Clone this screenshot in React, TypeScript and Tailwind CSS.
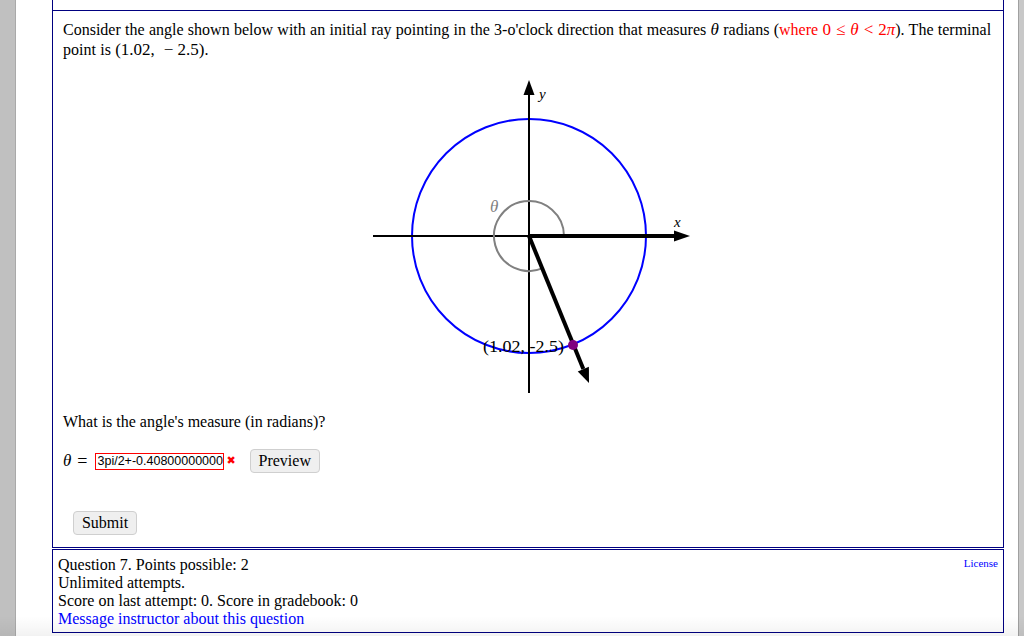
import React from "react";

function Graph() {
  const ux = 0.3778, uy = 0.9259;
  const T = { x: 588, y: 383 };
  const B = { x: T.x - 15 * ux, y: T.y - 15 * uy };
  const px = 0.9259, py = -0.3778;
  return (
    <svg width="340" height="330" viewBox="358 70 340 330" className="block mx-auto">
      <circle cx="528" cy="236" r="117" fill="none" stroke="#0000ff" strokeWidth="2" />
      <line x1="372" y1="236" x2="678" y2="236" stroke="#000" strokeWidth="2" />
      <polygon points="689,236 673,230.5 673,241.5" fill="#000" />
      <line x1="528" y1="393" x2="528" y2="90" stroke="#000" strokeWidth="2" />
      <polygon points="528,80 522.5,95 533.5,95" fill="#000" />
      <path d="M 563 236 A 35 35 0 1 0 541.8 268.2" fill="none" stroke="#808080" strokeWidth="2" />
      <line x1="528" y1="236" x2="676" y2="236" stroke="#000" strokeWidth="4" />
      <line x1="528" y1="236" x2={B.x} y2={B.y} stroke="#000" strokeWidth="4" />
      <polygon
        points={`${T.x},${T.y} ${B.x + 6 * px},${B.y + 6 * py} ${B.x - 6 * px},${B.y - 6 * py}`}
        fill="#000"
      />
      <text x="538" y="99" fontFamily="Liberation Serif, serif" fontStyle="italic" fontSize="15" fill="#000">y</text>
      <text x="673" y="227" fontFamily="Liberation Serif, serif" fontStyle="italic" fontSize="15" fill="#000">x</text>
      <text x="489" y="212" fontFamily="Liberation Serif, serif" fontStyle="italic" fontSize="17" fill="#808080">θ</text>
      <text x="482" y="352" fontFamily="Liberation Serif, serif" fontSize="17" fill="#000" textLength="81" lengthAdjust="spacingAndGlyphs">(1.02, -2.5)</text>
      <circle cx="572" cy="345" r="5" fill="#800080" />
    </svg>
  );
}

export default function App() {
  return (
    <div className="relative w-[1024px] h-[636px] overflow-hidden bg-white flex font-['Liberation_Serif',serif] text-black">
      <div className="w-[16px] h-full bg-[#c0c0c0] border-r border-[#a9a9a9]" />
      <div className="flex-1 h-full pl-[36px] bg-white">
        <div className="w-[952px] h-[11px] border-x border-b border-[#000080]" />
        <div className="w-[952px] h-[537px] border-x border-b border-[#000080] pl-[10px] pr-[8px] pt-[9px]">
          <p className="text-[16px] leading-[20px] [word-spacing:0.3px]">
            Consider the angle shown below with an initial ray pointing in the 3-o'clock direction that measures{" "}
            <i className="text-[17px]">θ</i> radians (
            <span className="text-[#ff0000]">
              where <span className="text-[17px]">0</span>
              <span className="mx-[5px] text-[17px]">≤</span>
              <i className="text-[17px]">θ</i>
              <span className="mx-[5px] text-[17px]">&lt;</span>
              <span className="text-[17px]">2</span>
              <i className="text-[17px]">π</i>
            </span>
            ). The terminal point is{" "}
            <span className="text-[17px]">
              (1.02,<span className="inline-block w-[9px]" />−<span className="inline-block w-[4px]" />2.5)
            </span>
            .
          </p>
          <div className="mt-[10px]">
            <Graph />
          </div>
          <p className="mt-[12px] text-[16px] leading-[20px]">What is the angle's measure (in radians)?</p>
          <div className="mt-[17px] flex items-center h-[24px]">
            <span className="text-[17px] italic">θ</span>
            <span className="text-[18px] ml-[6px]">=</span>
            <div className="ml-[7px] w-[129px] h-[17px] border border-[#ff0000] overflow-hidden whitespace-nowrap font-['Liberation_Sans',sans-serif] text-[12.5px] leading-[15px] pl-[2px]">
              3pi/2+-0.40800000000
            </div>
            <span className="ml-[3px] text-[#ff0000] text-[11px] font-['DejaVu_Sans',sans-serif]">✖</span>
            <button className="ml-[14px] w-[70px] h-[24px] bg-[#efefef] border border-[#cfcfcf] rounded-[4px] text-[16px] leading-[20px]">
              Preview
            </button>
          </div>
          <button className="mt-[38px] ml-[10px] w-[64px] h-[24px] bg-[#efefef] border border-[#cfcfcf] rounded-[4px] text-[16px] leading-[20px]">
            Submit
          </button>
        </div>
        <div className="h-[1px]" />
        <div className="w-[952px] h-[84px] border border-[#000080] pl-[5px] pr-[5px] pt-[6px] text-[16px] leading-[18px]">
          <div className="float-right text-[11px] leading-[14px] text-[#0000ff]">License</div>
          <div>Question 7. Points possible: 2</div>
          <div>Unlimited attempts.</div>
          <div>Score on last attempt: 0. Score in gradebook: 0</div>
          <div className="text-[#0000ff]">Message instructor about this question</div>
        </div>
      </div>
      <div className="w-[6px] h-full bg-[#c8c8c8] border-l border-[#a0a0a0]" />
      <div className="pointer-events-none absolute left-0 right-0 bottom-0 h-[20px] bg-gradient-to-b from-transparent to-[rgba(0,0,0,0.05)]" />
    </div>
  );
}
